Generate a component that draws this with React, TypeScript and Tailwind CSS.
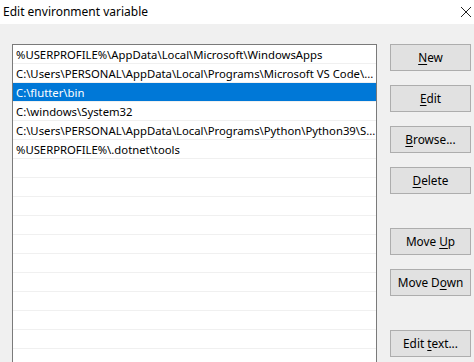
import React from 'react'

const rows = [
  '%USERPROFILE%\\AppData\\Local\\Microsoft\\WindowsApps',
  'C:\\Users\\PERSONAL\\AppData\\Local\\Programs\\Microsoft VS Code\\...',
  'C:\\flutter\\bin',
  'C:\\windows\\System32',
  'C:\\Users\\PERSONAL\\AppData\\Local\\Programs\\Python\\Python39\\S...',
  '%USERPROFILE%\\.dotnet\\tools',
  '', '', '', '', '', '', '', '', '', '', '',
]

function Btn({ pre, u, post, className = '' }: { pre: string; u: string; post: string; className?: string }) {
  return (
    <div className={`h-[27px] w-[81px] border border-[#adadad] bg-[#e1e1e1] flex items-center justify-center text-[11.8px] text-black ${className}`}>
      <span className="whitespace-pre">
        {pre}
        <span className="underline underline-offset-2">{u}</span>
        {post}
      </span>
    </div>
  )
}

export default function App() {
  return (
    <div className="w-[474px] h-[362px] overflow-hidden bg-[#f0f0f0] flex flex-col" style={{ fontFamily: '"Segoe UI", "Noto Sans", sans-serif' }}>
      <div className="h-[24px] bg-white flex items-center justify-between pl-[3px] pr-[2px] shrink-0">
        <span className="text-[12px] text-black">Edit environment variable</span>
        <svg width="12" height="12" viewBox="0 0 12 12">
          <path d="M1 1L11 11M11 1L1 11" stroke="#222" strokeWidth="1" />
        </svg>
      </div>
      <div className="flex pt-[20px] pl-[12px]">
        <div className="w-[365px] h-[330px] border border-[#7a7a7a] border-b-0 bg-white overflow-hidden">
          {rows.map((r, i) => (
            <div
              key={i}
              className={`h-[19px] px-[3px] pt-[2px] flex items-center whitespace-nowrap overflow-hidden text-[11.3px] border-b border-[#f0f0f0] ${i === 2 ? 'bg-[#0078d7] text-white' : 'text-black'}`}
            >
              {r}
            </div>
          ))}
        </div>
        <div className="ml-[13px] flex flex-col">
          <Btn pre="" u="N" post="ew" />
          <Btn pre="" u="E" post="dit" className="mt-[14px]" />
          <Btn pre="" u="B" post="rowse..." className="mt-[14px]" />
          <Btn pre="" u="D" post="elete" className="mt-[14px]" />
          <Btn pre="Move " u="U" post="p" className="mt-[34px]" />
          <Btn pre="Move D" u="o" post="wn" className="mt-[14px]" />
          <Btn pre="Edit " u="t" post="ext..." className="mt-[34px]" />
        </div>
      </div>
    </div>
  )
}
